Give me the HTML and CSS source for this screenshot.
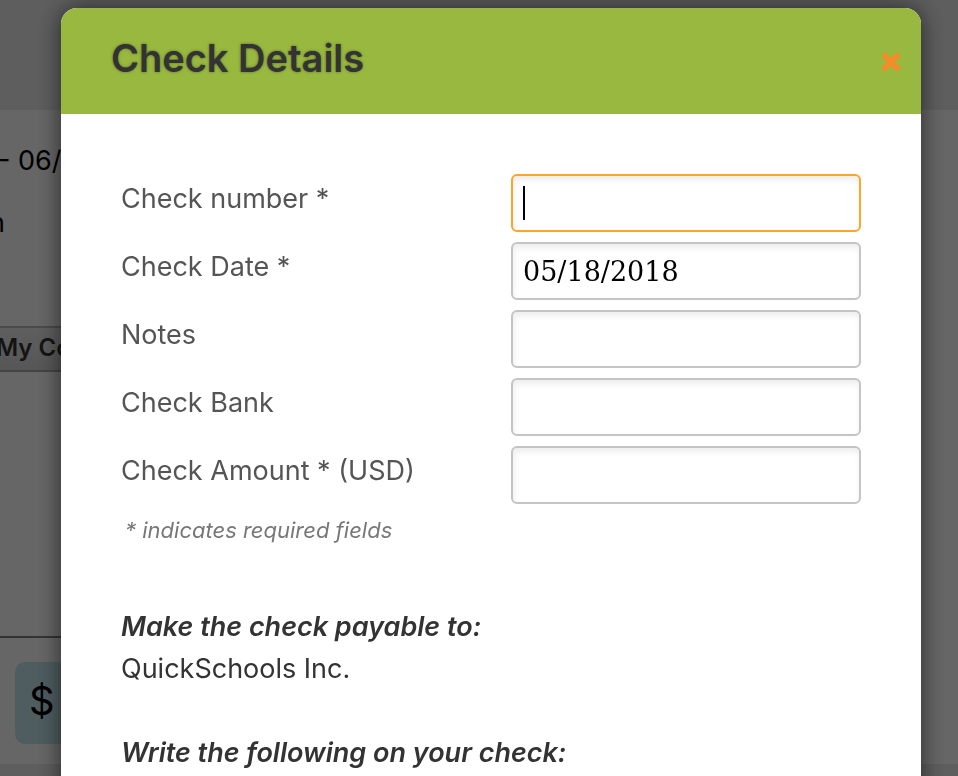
FILE: index.html
```
<!DOCTYPE html>
<html lang="en">
<head>
    <meta charset="UTF-8">
    <title>Check Details</title>
    <link rel="stylesheet" href="styles.css">
</head>
<body>

<div class="page">
    <div class="page-top"></div>
    <div class="page-main">
        <div class="period">- 06/</div>
        <div class="person">n</div>
        <div class="tab-bar">My Co</div>
        <div class="summary"></div>
        <div class="amount-row">
            <div class="amount">$</div>
        </div>
    </div>
    <div class="page-bottom"></div>
</div>

<!-- Modal window -->
<div class="overlay">
    <div class="modal" role="dialog" aria-labelledby="modalTitle">
        <div class="modal-header">
            <h1 id="modalTitle">Check Details</h1>
            <button type="button" class="close" aria-label="Close">
                <svg width="20" height="20" viewBox="0 0 20 20">
                    <path d="M4 4L16 16M16 4L4 16" stroke="#f28c28" stroke-width="6" stroke-linecap="round"/>
                </svg>
            </button>
        </div>
        <form class="modal-body">
            <div class="form-group">
                <label for="checkNumber">Check number *</label>
                <input type="text" id="checkNumber" class="active">
            </div>
            <div class="form-group">
                <label for="checkDate">Check Date *</label>
                <input type="text" id="checkDate" value="05/18/2018">
            </div>
            <div class="form-group">
                <label for="notes">Notes</label>
                <input type="text" id="notes">
            </div>
            <div class="form-group">
                <label for="checkBank">Check Bank</label>
                <input type="text" id="checkBank">
            </div>
            <div class="form-group">
                <label for="checkAmount">Check Amount * (USD)</label>
                <input type="text" id="checkAmount">
            </div>
            <p class="hint">* indicates required fields</p>

            <div class="info">
                <h2>Make the check payable to:</h2>
                <p>QuickSchools Inc.</p>
            </div>
            <div class="info">
                <h2>Write the following on your check:</h2>
            </div>
        </form>
    </div>
</div>

</body>
</html>
```
FILE: styles.css
```
* {
    box-sizing: border-box;
}
body {
    font-family: Inter, "Liberation Sans", sans-serif;
    font-size: 27px;
    line-height: 42px;
    margin: 0;
    color: #333;
}
h1, h2, p {
    margin: 0;
}

/* Page under the modal */
.page {
    display: flex;
    flex-direction: column;
    height: 100vh;
    margin-left: -12px;
    overflow: hidden;
    color: #000;
    white-space: nowrap;
}
.page-top {
    flex: none;
    height: 110px;
    background-color: #ebebeb;
}
.page-main {
    flex: 1;
    padding: 30px 60px 0 0;
    background-color: #fff;
}
.period {
    height: 62px;
    padding-left: 10px;
}
.person {
    height: 124px;
    padding-left: 1px;
}
.tab-bar {
    height: 46px;
    padding-left: 8px;
    border-top: 2px solid #bbb;
    border-bottom: 2px solid #aaa;
    background: linear-gradient(#ececec, #d8d8d8);
    color: #333;
    font-size: 24px;
    font-weight: 600;
    line-height: 40px;
}
.summary {
    height: 266px;
    border-bottom: 2px solid #808080;
}
.amount-row {
    padding: 24px 0 0 27px;
}
.amount {
    height: 82px;
    padding-left: 14px;
    border-radius: 10px;
    background-color: #c5e8f0;
    font-size: 40px;
    line-height: 78px;
}
.page-bottom {
    flex: none;
    height: 12px;
    background-color: #ebebeb;
}

/* Modal window */
.overlay {
    position: fixed;
    top: 0;
    right: 0;
    bottom: 0;
    left: 0;
    overflow: hidden;
    padding: 8px 37px 0 61px;
    background-color: rgba(0, 0, 0, 0.6);
}
.modal {
    border-radius: 16px 16px 0 0;
    background-color: #fff;
    box-shadow: 0 0 24px rgba(0, 0, 0, 0.6);
}
.modal-header {
    display: flex;
    align-items: center;
    justify-content: space-between;
    height: 106px;
    padding: 0 20px 6px 50px;
    border-radius: 16px 16px 0 0;
    background-color: #99b840;
}
.modal-header h1 {
    font-size: 38px;
    font-weight: 600;
    line-height: 48px;
    text-shadow: 0 0 3px rgba(0, 0, 0, 0.4);
}
.close {
    display: flex;
    padding: 8px 0 0;
    border: none;
    background: none;
    cursor: pointer;
}
.modal-body {
    padding: 60px;
}
.form-group {
    display: flex;
    justify-content: space-between;
    margin-bottom: 10px;
    color: #555;
}
.form-group label {
    line-height: 50px;
}
.form-group input {
    width: 350px;
    height: 58px;
    padding: 0 10px;
    border: 2px solid #c4c4c4;
    border-radius: 6px;
    background-color: #fff;
    box-shadow: inset 1px 4px 6px rgba(0, 0, 0, 0.07);
    color: #000;
    font-family: "DejaVu Serif", serif;
    font-size: 27px;
    outline: none;
}
.form-group input.active {
    border-color: #f9a62b;
    /* text cursor */
    background: #fff linear-gradient(#000, #000) no-repeat 10px 10px / 2px 34px;
}
.hint {
    padding-left: 4px;
    color: #777;
    font-size: 22px;
    font-style: italic;
    line-height: 32px;
}
.info {
    margin-top: 42px;
}
.hint + .info {
    margin-top: 60px;
}
.info h2 {
    font-size: 27px;
    font-style: italic;
    font-weight: 600;
    line-height: 42px;
}
```
